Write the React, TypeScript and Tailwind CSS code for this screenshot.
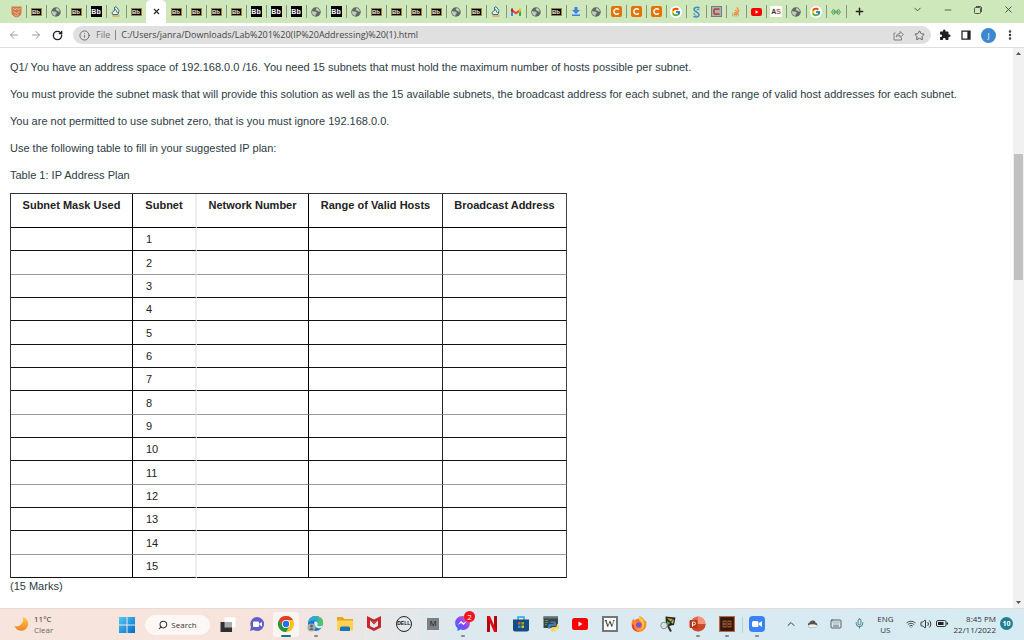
import React from "react";
import { FcGoogle } from "react-icons/fc";
import {
  ArrowLeft,
  ArrowRight,
  ChevronDown,
  ChevronUp,
  Info,
  Keyboard,
  Mic,
  Minus,
  MoreVertical,
  Plus,
  RotateCw,
  Search,
  Star,
  Volume2,
  Wifi,
  X,
} from "lucide-react";

type TabKind =
  | "crest" | "gold" | "globe" | "bb" | "house" | "active" | "gmail" | "download"
  | "c" | "google" | "s" | "boxc" | "stack" | "youtube" | "as" | "geeks";

const tabs: TabKind[] = [
  "crest", "gold", "globe", "gold", "bb", "house", "gold", "active",
  "gold", "gold", "gold", "gold", "bb", "bb", "bb", "globe", "bb", "globe",
  "gold", "gold", "gold", "gold", "globe", "gold", "house", "gmail", "globe",
  "gold", "download", "globe", "c", "c", "c", "google", "s", "boxc", "stack",
  "youtube", "as", "globe", "google", "geeks",
];

function Favicon({ kind }: { kind: TabKind }) {
  switch (kind) {
    case "crest":
      return (
        <svg width="11" height="12" viewBox="0 0 22 24">
          <path d="M1 1h20v12c0 5-4 8-10 10C5 21 1 18 1 13z" fill="#d07a4e" />
          <path d="M4 4l4 4 3-4 4 4 4-4M5 11l6 4 6-4M7 17l4 3 4-3" stroke="#f0d3b4" strokeWidth="1.5" fill="none" />
        </svg>
      );
    case "gold":
      return (
        <span className="flex h-2 w-[11px] items-center justify-center overflow-hidden border border-[#9a8338] bg-black font-['Liberation_Sans',sans-serif] text-[6px] font-bold leading-none text-[#eee]">Bb</span>
      );
    case "bb":
      return (
        <span className="flex h-[11px] w-[11px] items-center justify-center bg-black font-['Liberation_Sans',sans-serif] text-[7px] font-bold leading-none text-white">Bb</span>
      );
    case "globe":
      return (
        <svg width="10" height="10" viewBox="0 0 20 20">
          <circle cx="10" cy="10" r="9.500" fill="#5f6868" />
          <path d="M2.500 8c1 0 3 1 5 1 2 1 4 1 4 3s-2 2-2 3-1 3-2 3C3 16 1 12 2.500 8zM11 2c4 0 7 4 6.500 7-2 1-3 0-4-1s-4 0-4-2 1-2 1.500-4z" fill="#b9cdb0" />
        </svg>
      );
    case "house":
      return (
        <svg width="10" height="11" viewBox="0 0 20 22">
          <path d="M6 4l4-3 6 8-2 8H3l-1-4 7-6 4 7M7 3v6" fill="#e8f2e3" stroke="#3f7286" strokeWidth="2" />
          <path d="M3 20h14" stroke="#e8a24c" strokeWidth="3" />
        </svg>
      );
    case "gmail":
      return (
        <svg width="10" height="8" viewBox="0 0 20 16">
          <path d="M0 3v13h4V6z" fill="#4285f4" />
          <path d="M20 3v13h-4V6z" fill="#34a853" />
          <path d="M2 2l8 6 8-6v5l-8 6-8-6z" fill="#ea4335" />
          <path d="M16 1q4-2 4 2v3l-4 3z" fill="#fbbc04" />
          <path d="M4 1Q0-1 0 3v3l4 3z" fill="#c5221f" />
        </svg>
      );
    case "download":
      return (
        <svg width="8" height="9" viewBox="0 0 16 18">
          <path d="M5 0h6v6h5l-8 8-8-8h5zM0 15h16v3H0z" fill="#3f7ce8" />
        </svg>
      );
    case "c":
      return (
        <svg width="11" height="11" viewBox="0 0 22 22">
          <rect width="22" height="22" rx="4" fill="#e57200" />
          <path d="M15.500 7.500A5.500 5.500 0 1 0 15.500 14.500" fill="none" stroke="#fff" strokeWidth="3" />
        </svg>
      );
    case "google":
      return <span className="flex h-3 w-3 items-center justify-center rounded-full bg-white"><FcGoogle size={10} /></span>;
    case "s":
      return (
        <svg width="9" height="12" viewBox="0 0 18 24">
          <path d="M15 4C8 0 2 5 5 9s10 4 9 9-8 5-11 2" fill="none" stroke="#3c8ec4" strokeWidth="3" />
          <path d="M15 8c-4-2-6-1-5 1M3 14c1 3 4 3 5 5" fill="none" stroke="#3579a8" strokeWidth="2" />
        </svg>
      );
    case "boxc":
      return (
        <svg width="11" height="11" viewBox="0 0 22 22">
          <rect x="1" y="1" width="20" height="20" fill="#aab2b8" stroke="#777b80" strokeWidth="2" />
          <path d="M17 6H8L6 8v6l2 2h9" fill="none" stroke="#b8482f" strokeWidth="3.500" />
        </svg>
      );
    case "stack":
      return (
        <svg width="10" height="11" viewBox="0 0 20 22">
          <path d="M3 14v6h12v-6" fill="none" stroke="#b5b89d" strokeWidth="2" />
          <path d="M5 17h8M6 13l8 2M8 8l7 5M12 3l4 8" stroke="#ee9137" strokeWidth="3" />
        </svg>
      );
    case "youtube":
      return (
        <svg width="11" height="8" viewBox="0 0 22 16">
          <rect width="22" height="16" rx="4" fill="#f00" />
          <path d="M9 4.500l6 3.500-6 3.500z" fill="#fff" />
        </svg>
      );
    case "as":
      return (
        <span className="flex h-[11px] w-3 items-center justify-center bg-white font-['Liberation_Sans',sans-serif] text-[7px] font-bold leading-none text-[#333]">
          A<span className="text-[#b0594d]">S</span>
        </span>
      );
    case "geeks":
      return (
        <svg width="10" height="6" viewBox="0 0 20 12">
          <path d="M2 3q3-3 6 0v6q-3 3-6 0M18 3q-3-3-6 0v6q3 3 6 0M0 6h20" fill="none" stroke="#459653" strokeWidth="2" />
        </svg>
      );
    default:
      return <X size={9} strokeWidth={3} color="#222" />;
  }
}

function TabStrip() {
  return (
    <header className="flex h-[23px] shrink-0 bg-[#cee8bb] pl-1.5">
      <div className="flex">
        {tabs.map((kind, i) => {
          const active = kind === "active";
          const line = !active && tabs[i + 1] !== "active";
          return (
            <button
              key={i}
              aria-label={active ? "Close tab" : "Tab " + (i + 1)}
              className={
                active
                  ? "flex w-5 items-center justify-center rounded-t-[5px] bg-white"
                  : "relative flex w-5 items-center justify-center"
              }
            >
              <Favicon kind={kind} />
              {line && <span className="absolute -right-px top-[5px] h-[13px] w-px bg-[#87987c]" />}
            </button>
          );
        })}
      </div>
      <button aria-label="New tab" className="ml-2 flex items-center"><Plus size={11} strokeWidth={3} color="#222" /></button>
      <div className="ml-auto flex items-center gap-5 pb-1 pr-2.5 text-[#444]">
        <button aria-label="Search tabs"><ChevronDown size={11} strokeWidth={2} /></button>
        <button aria-label="Minimize"><Minus size={10} strokeWidth={2} /></button>
        <button aria-label="Restore">
          <svg width="10" height="10" viewBox="0 0 20 20" fill="none" stroke="currentColor" strokeWidth="1.800">
            <rect x="3" y="5" width="12" height="12" rx="2" />
            <path d="M6 3h8q3 0 3 3v8" />
          </svg>
        </button>
        <button aria-label="Close window"><X size={11} strokeWidth={2} /></button>
      </div>
    </header>
  );
}

function Toolbar() {
  return (
    <nav className="flex h-[25px] shrink-0 items-center border-b border-[#dfdfdf] bg-white pl-2 pr-2">
      <button aria-label="Back" className="text-[#9a9a9a]"><ArrowLeft size={12} strokeWidth={2} /></button>
      <button aria-label="Forward" className="ml-2.5 text-[#9a9a9a]"><ArrowRight size={12} strokeWidth={2} /></button>
      <button aria-label="Reload" className="ml-2.5 text-[#222]"><RotateCw size={11} strokeWidth={3} /></button>
      <div className="ml-2.5 flex h-[18px] min-w-0 flex-1 items-center rounded-full bg-[#e0e0e0] px-1.5 font-['Open_Sans','Noto_Sans',sans-serif] text-[9px] text-[#777]">
        <Info size={11} strokeWidth={2} color="#666" />
        <label htmlFor="address" className="ml-1.5">File</label>
        <span className="mx-[5px] h-2.5 w-px bg-[#888]" />
        <input
          id="address"
          className="min-w-0 flex-1 bg-transparent text-[9px] text-[#444] outline-none"
          defaultValue="C:/Users/janra/Downloads/Lab%201%20(IP%20Addressing)%20(1).html"
        />
        <button aria-label="Share" className="mr-2.5">
          <svg width="11" height="11" viewBox="0 0 22 22" fill="none" stroke="#777" strokeWidth="1.800">
            <path d="M5 6H2v14h15v-5M6 14q1-7 8-7V3l7 6-7 6v-4q-5 0-8 3z" />
          </svg>
        </button>
        <button aria-label="Bookmark"><Star size={11} strokeWidth={2} color="#555" /></button>
      </div>
      <button aria-label="Extensions" className="ml-2">
        <svg width="12" height="12" viewBox="0 0 24 24" fill="#222">
          <path d="M20.500 11H19V7c0-1.100-.9-2-2-2h-4V3.500a2.500 2.500 0 0 0-5 0V5H4c-1.100 0-2 .9-2 2v3.800h1.500a2.700 2.700 0 0 1 0 5.400H2V20c0 1.100.9 2 2 2h3.800v-1.500a2.700 2.700 0 0 1 5.400 0V22H17c1.100 0 2-.9 2-2v-4h1.500a2.500 2.500 0 0 0 0-5z" />
        </svg>
      </button>
      <button aria-label="Side panel" className="ml-2.5">
        <svg width="10" height="10" viewBox="0 0 20 20"><path d="M2 2h16v16H2zM14 2v16M16 2v16" fill="none" stroke="#222" strokeWidth="2.500" /></svg>
      </button>
      <button className="ml-2.5 flex h-[15px] w-[15px] items-center justify-center rounded-full bg-[#3c88d1] font-['Open_Sans',sans-serif] text-[8px] leading-none text-white">J</button>
      <button aria-label="Menu" className="ml-2"><MoreVertical size={12} strokeWidth={3} color="#333" /></button>
    </nav>
  );
}

const headCell = "h-[34px] border-b border-b-black pt-[3px] text-center align-top font-bold leading-4";
const columns = [
  { label: "Subnet Mask Used", edge: "border-r border-r-black" },
  { label: "Subnet", edge: "border-r-2 border-r-[#ececec]" },
  { label: "Network Number", edge: "border-r border-r-black" },
  { label: "Range of Valid Hosts", edge: "border-r border-r-[#222]" },
  { label: "Broadcast Address", edge: "border-r border-r-[#444]" },
];

function PlanTable() {
  return (
    <table className="mt-2.5 w-[557px] table-fixed border-separate border-spacing-0 border-l border-t border-[#333] text-[11px] text-[#222]">
      <colgroup>
        <col className="w-[122px]" />
        <col className="w-16" />
        <col className="w-28" />
        <col className="w-[134px]" />
        <col className="w-[124px]" />
      </colgroup>
      <thead>
        <tr>
          {columns.map((c) => <th key={c.label} scope="col" className={headCell + " " + c.edge}>{c.label}</th>)}
        </tr>
      </thead>
      <tbody>
        {Array.from({ length: 15 }, (_, i) => {
          const n = i + 1;
          const tall = n % 3 === 2;
          const line = tall && n !== 5 ? "border-b border-b-[#999] " : "border-b border-b-[#111] ";
          return (
            <tr key={n} className={tall ? "h-6" : "h-[23px]"}>
              {columns.map((c, k) => (
                <td key={c.label} className={line + c.edge + " p-0 pl-[13px] leading-4"}>
                  {k === 1 ? n : null}
                </td>
              ))}
            </tr>
          );
        })}
      </tbody>
    </table>
  );
}

const paragraphs = [
  "Q1/ You have an address space of 192.168.0.0 /16. You need 15 subnets that must hold the maximum number of hosts possible per subnet.",
  "You must provide the subnet mask that will provide this solution as well as the 15 available subnets, the broadcast address for each subnet, and the range of valid host addresses for each subnet.",
  "You are not permitted to use subnet zero, that is you must ignore 192.168.0.0.",
  "Use the following table to fill in your suggested IP plan:",
  "Table 1: IP Address Plan",
];

function Page() {
  return (
    <div className="flex min-h-0 flex-1 bg-white">
      <main className="min-w-0 flex-1 overflow-hidden pl-2.5 pt-[11px] font-['Liberation_Sans',Arial,sans-serif] text-[11px] leading-4 text-[#2d3b45]">
        <div className="flex flex-col gap-[11px]">
          {paragraphs.map((p) => <p key={p}>{p}</p>)}
        </div>
        <PlanTable />
        <p>(15 Marks)</p>
      </main>
      <div className="flex w-[11px] shrink-0 flex-col items-center bg-[#f1f1f1]">
        <svg className="mt-1" width="5" height="3" viewBox="0 0 5 3"><path d="M0 3l2.500-3L5 3z" fill="#555" /></svg>
        <div className="mt-[99px] h-[126px] w-[9px] bg-[#c1c1c1]" />
        <svg className="mb-1 mt-auto" width="5" height="3" viewBox="0 0 5 3"><path d="M0 0l2.500 3L5 0z" fill="#555" /></svg>
      </div>
    </div>
  );
}

const apps: { name: string; open?: boolean; icon: React.ReactNode }[] = [
  { name: "Chat", icon: (
    <svg width="16" height="16" viewBox="0 0 32 32"><path d="M16 2a14 14 0 1 1-7 26l-7 2 2-8A14 14 0 0 1 16 2z" fill="#625fc4" /><rect x="8" y="11" width="12" height="11" rx="2" fill="#fff" /><path d="M21 15l5-3v9l-5-3z" fill="#fff" /></svg>) },
  { name: "Chrome", open: true, icon: (
    <svg width="16" height="16" viewBox="0 0 48 48"><circle cx="24" cy="24" r="24" fill="#fbc116" /><path d="M3.200 12A24 24 0 0 1 44.800 12H24L13.600 30z" fill="#e33b2e" /><path d="M3.200 12L13.600 30Q18 37 24 36l10.400-6L24 48A24 24 0 0 1 3.200 12z" fill="#229342" /><circle cx="24" cy="24" r="12" fill="#fff" /><circle cx="24" cy="24" r="9.500" fill="#1a73e8" /></svg>) },
  { name: "Edge", open: true, icon: (
    <svg width="17" height="17" viewBox="0 0 34 34"><circle cx="17" cy="17" r="15" fill="#1676c5" /><path d="M2 16C3 5 11 1 19 2c9 1 14 8 13 15-1 6-8 7-12 4 3-6-1-10-6-10-6 0-10 3-12 5z" fill="#2fa9d0" /><path d="M20 2c9 2 14 9 12 15-1 6-8 7-12 4 4-6 5-13 0-19z" fill="#4ec46a" /><path d="M15 13c7-1 8 5 5 8 4 3 9 1 12-1-1 3-2 5-4 6-7 3-16-4-13-13z" fill="#e4f1f6" /><circle cx="9" cy="25" r="8" fill="#a6abae" /><circle cx="9" cy="22" r="3" fill="#5d6a70" /><path d="M4 30q5-8 10 0z" fill="#5d6a70" /></svg>) },
  { name: "File Explorer", icon: (
    <svg width="16" height="14" viewBox="0 0 32 28"><path d="M0 0h11l4 4h17v20H0z" fill="#e7a51d" /><path d="M0 7h32v20H0z" fill="#ffd253" /><path d="M6 22q0-3 3-3h14q3 0 3 3v6H6z" fill="#1775bd" /></svg>) },
  { name: "McAfee", icon: (
    <svg width="14" height="15" viewBox="0 0 28 30"><path d="M0 0l14 7L28 0v23l-14 7-14-7z" fill="#c4272f" /><path d="M6 9l8 4 8-4v11l-8 4-8-4z" fill="#e3e9ec" /><path d="M6 9l8 4 8-4v0l-8 8-8-8z" fill="#c4272f" /></svg>) },
  { name: "Dell", icon: (
    <span className="flex h-4 w-4 items-center justify-center rounded-full border border-[#222] font-['Liberation_Sans',sans-serif] text-[5px] font-bold leading-none text-[#111]">DELL</span>) },
  { name: "M", icon: <span className="flex h-3 w-3 items-center justify-center bg-[#7d8184] font-['Liberation_Sans',sans-serif] text-[8px] leading-none text-[#222]">M</span> },
  { name: "Messenger", open: true, icon: (
    <span className="relative">
      <svg width="17" height="17" viewBox="0 0 34 34"><defs><linearGradient id="msg" x1="0" y1="1" x2="1" y2="0"><stop offset="0" stopColor="#167dff" /><stop offset=".5" stopColor="#8b45f4" /><stop offset="1" stopColor="#ff5c88" /></linearGradient></defs><path d="M17 2c9 0 15 6 15 14 0 10-9 16-19 13l-6 3v-6C-3 17 4 2 17 2z" fill="url(#msg)" /><path d="M7 20l7-8 5 4 7-4-7 8-5-4z" fill="#fff" /></svg>
      <span className="absolute -right-1 -top-1 flex h-[11px] w-[11px] items-center justify-center rounded-full bg-[#f5131c] text-[8px] leading-none text-white">2</span>
    </span>) },
  { name: "Netflix", icon: (
    <svg width="10" height="16" viewBox="0 0 20 32"><path d="M0 0h6v32H0zM14 0h6v32h-6z" fill="#b00710" /><path d="M0 0h6l14 32h-6z" fill="#e50914" /></svg>) },
  { name: "Store", icon: (
    <svg width="16" height="16" viewBox="0 0 32 32"><path d="M10 8V2h12v6" fill="none" stroke="#2aa4dc" strokeWidth="3" /><path d="M0 7h32v20q0 4-4 4H4q-4 0-4-4z" fill="#174d83" /><path d="M10 12h5v5h-5z" fill="#f25022" /><path d="M17 12h5v5h-5z" fill="#7fba00" /><path d="M10 19h5v5h-5z" fill="#00a4ef" /><path d="M17 19h5v5h-5z" fill="#ffb900" /></svg>) },
  { name: "Python", icon: (
    <svg width="16" height="16" viewBox="0 0 32 32"><path d="M1 1h29v23H1z" fill="#394549" /><path d="M1 1h29v4H1z" fill="#68777a" /><path d="M4 9h6M4 13h6M4 17h4" stroke="#4a9369" strokeWidth="2" /><path d="M15 11h8q3 0 3 4v5h-8q-4 0-4 5h-4v-6q0-3 3-3h8v-2h-6z" fill="#3f7ebc" /><path d="M28 15q4 1 4 7 0 4-4 4h-6v2h6q-2 4-12 3v-5q0-4 4-4h5q3 0 3-7z" fill="#ffd74b" /></svg>) },
  { name: "YouTube", icon: (
    <svg width="16" height="12" viewBox="0 0 32 24"><rect width="32" height="24" rx="5" fill="#f00" /><path d="M13 7l8 5-8 5z" fill="#fff" /></svg>) },
  { name: "Wikipedia", icon: <span className="flex h-4 w-4 items-center justify-center border-2 border-[#73777a] bg-white font-['Liberation_Serif',serif] text-[11px] leading-none text-[#222]">W</span> },
  { name: "Firefox", icon: (
    <svg width="16" height="16" viewBox="0 0 32 32"><circle cx="16" cy="18" r="13" fill="#ff7139" /><path d="M17 0q9 4 11 11l2-2q4 20-13 23Q1 32 1 17q0-8 4-12l2 4 4-2-1 5h6q-7 2-5 7 4 5 10 1 5-6 0-11-5-4-4-9z" fill="#ff8b24" /><path d="M18 1q11 8 8 20-4 9-14 6 11 0 11-9-1-6-6-9-2-3 1-8z" fill="#ffc83d" /><circle cx="15.500" cy="18" r="5.500" fill="#8050d8" /><path d="M2 15q-1 15 14 17-10-4-11-14z" fill="#e82867" /></svg>) },
  { name: "Packet Tracer", icon: (
    <svg width="16" height="16" viewBox="0 0 32 32"><path d="M11 1l20 2-3 15-16 3z" fill="#252921" /><path d="M14 4l12 2-5 5z" fill="#d69b45" /><path d="M14 10l7 4-7 5z" fill="#37a657" /><path d="M22 12l6-6-2 10z" fill="#c9b276" /><circle cx="8" cy="19" r="6.500" fill="#dce3e1" stroke="#8a9291" strokeWidth="2" /><path d="M16 20l6 11" stroke="#333" strokeWidth="4" /></svg>) },
  { name: "PowerPoint", open: true, icon: (
    <svg width="17" height="16" viewBox="0 0 34 32"><circle cx="18" cy="16" r="15" fill="#e0694b" /><path d="M18 1a15 15 0 0 1 15 15H18z" fill="#f49579" /><path d="M4 16h29a15 15 0 0 1-28 7z" fill="#c9492a" /><rect x="1" y="8" width="16" height="16" rx="2" fill="#b9371b" /><path d="M7 21v-9h2q4 0 4 3t-4 3H7" fill="none" stroke="#fff" strokeWidth="2" /></svg>) },
  { name: "Circuit", open: true, icon: (
    <svg width="16" height="16" viewBox="0 0 32 32"><rect x="1" y="1" width="30" height="30" fill="#2b1a14" stroke="#c4633c" strokeWidth="2.500" /><rect x="7" y="9" width="18" height="14" fill="#9c4a27" /><path d="M9 13h5M18 13h5M9 19h5M18 19h5M16 9v14" fill="none" stroke="#3c2016" strokeWidth="2" /></svg>) },
];

function Taskbar() {
  return (
    <footer className="flex h-8 shrink-0 items-center border-t border-[#e8dcd8] bg-gradient-to-r from-[#f7e4dd] from-25% via-[#dce9ef] via-45% to-[#d6ebf3] font-['Open_Sans','Noto_Sans',sans-serif] text-[8px] text-[#333]">
      <button className="flex w-28 items-center gap-1 pb-0.5 pl-3.5 text-left leading-[11px]">
        <svg width="16" height="16" viewBox="0 0 32 32"><defs><linearGradient id="moon" x1="0" y1="0" x2="0" y2="1"><stop stopColor="#ffcb45" /><stop offset="1" stopColor="#ee8425" /></linearGradient></defs><path d="M18 2a14 14 0 1 1-17 18C11 23 20 14 18 2z" fill="url(#moon)" /></svg>
        <span>11°C<br /><span className="text-[#666]">Clear</span></span>
      </button>
      <button aria-label="Start" className="ml-[7px]">
        <svg width="16" height="16" viewBox="0 0 32 32"><defs><linearGradient id="win" x1="0" y1="0" x2="1" y2="1"><stop stopColor="#51cbf5" /><stop offset="1" stopColor="#006cce" /></linearGradient></defs><path d="M0 0h15v15H0zM17 0h15v15H17zM0 17h15v15H0zM17 17h15v15H17z" fill="url(#win)" /></svg>
      </button>
      <button className="ml-2.5 flex h-5 w-[65px] items-center justify-center gap-[3px] rounded-full bg-[#fdf8f5]">
        <Search size={10} strokeWidth={2.500} className="-scale-x-100" /><span>Search</span>
      </button>
      <button aria-label="Task view" className="ml-2.5">
        <svg width="16" height="16" viewBox="0 0 32 32"><path d="M9 1h22v20H9z" fill="#fff" /><path d="M1 10h23v20H1z" fill="#303030" /><path d="M9 10h15v11H9z" fill="#aaa" /></svg>
      </button>
      <div className="ml-1.5 flex h-full w-[500px] items-center">
        {apps.map((a) => (
          <button key={a.name} aria-label={a.name} className="relative flex h-full flex-1 items-center justify-center">
            {a.name === "Chrome" && <span className="absolute inset-x-0.5 inset-y-[3px] rounded-[3px] bg-white/60" />}
            <span className="relative flex pb-0.5">{a.icon}</span>
            {a.open && <span className={a.name === "Chrome" ? "absolute bottom-[3px] h-0.5 w-2.5 rounded bg-[#1a7487]" : "absolute bottom-[3px] h-0.5 w-1 rounded bg-[#888]"} />}
          </button>
        ))}
      </div>
      <span className="h-4 w-px bg-[#bfcfd6]" />
      <button aria-label="Zoom" className="relative ml-1.5 flex h-full items-center pb-0.5">
        <svg width="16" height="16" viewBox="0 0 32 32"><rect width="32" height="32" rx="8" fill="#3b82f6" /><rect x="6" y="10" width="13" height="12" rx="3" fill="#fff" /><path d="M20 14l6-4v12l-6-4z" fill="#fff" /></svg>
        <span className="absolute bottom-[3px] left-1.5 h-0.5 w-1 rounded bg-[#888]" />
      </button>
      <div className="ml-auto flex items-center pb-0.5 pr-[11px]">
        <button aria-label="Hidden icons"><ChevronUp size={12} strokeWidth={2} /></button>
        <svg className="ml-2.5" width="11" height="8" viewBox="0 0 22 16"><path d="M2 10Q1 6 5 5q2-5 8-4 3 0 4 4 4 1 4 6-2 5-6 4H5q-3-1-3-5z" fill="#555" /><path d="M2 11q8-5 19 0-1 4-6 4H6q-4-1-4-4z" fill="#eee" /></svg>
        <Keyboard className="ml-3" size={12} strokeWidth={1.500} />
        <Mic className="ml-3" size={11} strokeWidth={2} color="#3d7180" />
        <button className="ml-3 text-center leading-[11px]">ENG<br />US</button>
        <button aria-label="Network, volume and battery" className="ml-3 flex items-center gap-1">
          <Wifi size={10} strokeWidth={2} />
          <Volume2 size={12} strokeWidth={2} />
          <svg width="12" height="7" viewBox="0 0 24 14"><rect x="1" y="1" width="19" height="12" rx="3" fill="none" stroke="#333" strokeWidth="2" /><path d="M4 4h11v6H4zM21 5h3v4h-3z" fill="#222" /></svg>
        </button>
        <button className="ml-1.5 text-right leading-[11px]">8:45 PM<br />22/11/2022</button>
        <span className="ml-1 flex h-[13px] w-[13px] items-center justify-center rounded-full bg-[#20808f] text-[7px] font-bold leading-none text-white">10</span>
      </div>
    </footer>
  );
}

export default function App() {
  return (
    <div className="flex h-screen flex-col overflow-hidden bg-white">
      <TabStrip />
      <Toolbar />
      <Page />
      <Taskbar />
    </div>
  );
}
